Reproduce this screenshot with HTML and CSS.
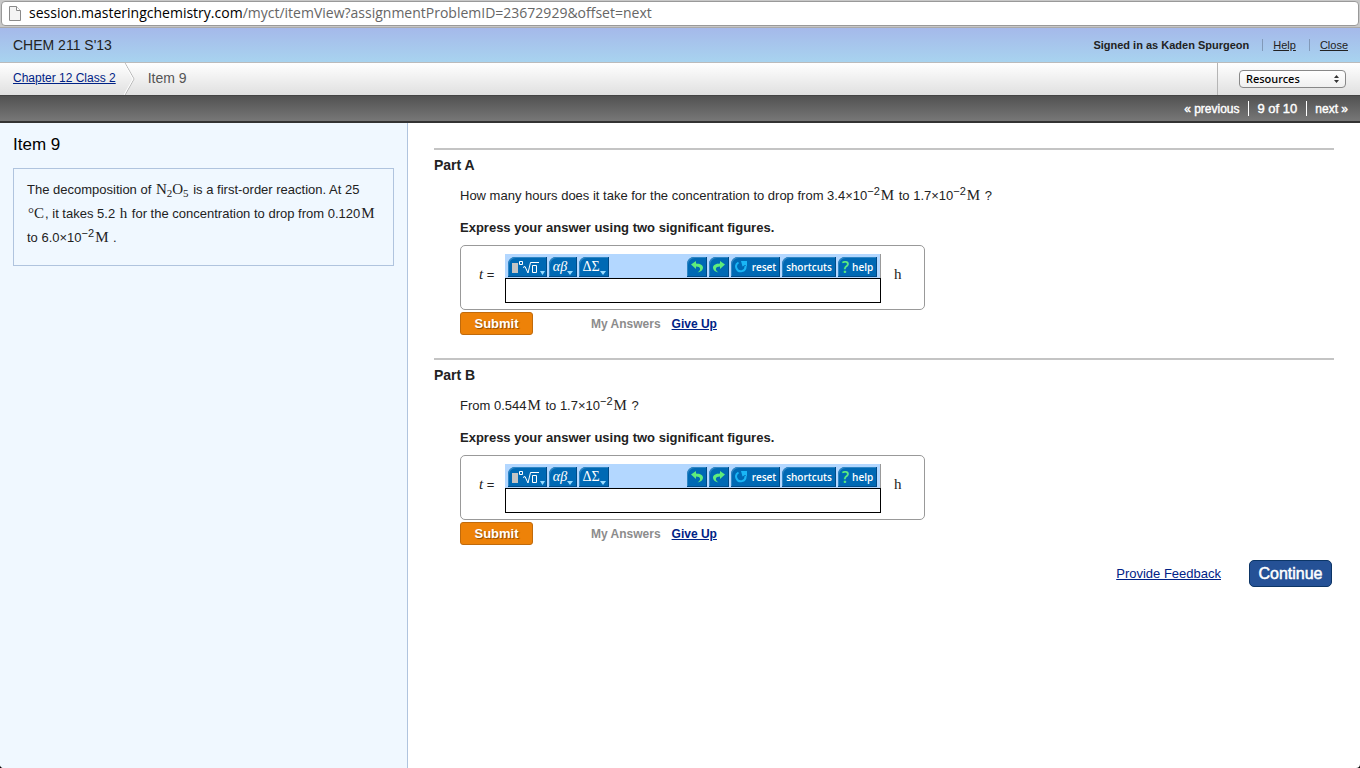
FILE: index.html
```
<!DOCTYPE html>
<html lang="en">
<head>
  <meta charset="UTF-8">
  <title>MasteringChemistry: Item 9</title>
  <link rel="stylesheet" href="styles.css">
</head>
<body>

<div class="address-bar">
  <div class="address">
    <svg width="12" height="15" viewBox="0 0 12 15"><path d="M.5.5h7l4 4v10H.5z" fill="#f4f4f4" stroke="#8a8a8a"/><path d="M7.500.5v4h4" fill="#fff" stroke="#8a8a8a"/></svg>
    <span class="url"><b>session.masteringchemistry.com</b>/myct/itemView?assignmentProblemID=23672929&amp;offset=next</span>
  </div>
</div>

<header class="course-bar">
  <span class="course">CHEM 211 S'13</span>
  <div class="account">
    <strong>Signed in as Kaden Spurgeon</strong>
    <a href="#">Help</a>
    <a href="#">Close</a>
  </div>
</header>

<nav class="crumbs">
  <a href="#">Chapter 12 Class 2</a>
  <svg class="chevron" width="11" height="32" viewBox="0 0 11 32"><path d="M1 0l9 16-9 16" fill="none" stroke="#b5b5b5"/><path d="M0 0l9 16-9 16" fill="none" stroke="#fff"/></svg>
  <span class="here">Item 9</span>
  <div class="resources">
    <div class="select-wrap">
      <select aria-label="Resources">
        <option>Resources</option>
      </select>
      <svg width="5" height="8" viewBox="0 0 5 8"><path d="M0 3l2.500-3L5 3zM0 5h5L2.500 8z" fill="#333"/></svg>
    </div>
  </div>
</nav>

<div class="pager">
  <a href="#">« previous</a>
  <span>9 of 10</span>
  <a href="#">next »</a>
</div>

<div class="content">
  <aside class="sidebar">
    <h1>Item 9</h1>
    <div class="problem">
      The decomposition of <span class="math">N<sub>2</sub>O<sub>5</sub></span> is a first-order reaction. At 25 <span class="math">°C</span>, it takes 5.2 <span class="math">h</span> for the concentration to drop from 0.120<span class="math">M</span> to 6.0×10<sup>−2</sup><span class="math">M</span> .
    </div>
  </aside>

  <main class="parts">
    <section class="part">
      <h2>Part A</h2>
      <div class="part-body">
        <p>How many hours does it take for the concentration to drop from 3.4×10<sup>−2</sup><span class="math">M</span> to 1.7×10<sup>−2</sup><span class="math">M</span> ?</p>
        <p class="instruction">Express your answer using two significant figures.</p>
        <div class="answer">
          <label for="answer-a"><i>t</i> =</label>
          <div class="editor">
            <div class="toolbar">
              <button class="tool templates" aria-label="Templates"><svg width="34" height="18" viewBox="0 0 34 18"><path d="M1 5h6v10H1z" fill="#c4c4c4"/><path d="M8.500 3.500h3v3h-3zM21.500 7.500h4v7h-4z" fill="none" stroke="#fff"/><path d="M12 9.500l2-1 3 6.500 2.500-10.500H28" fill="none" stroke="#fff"/><path d="M29 13h5l-2.500 4z" fill="#9bdcff"/></svg></button>
              <button class="tool greek"><i>αβ</i><span class="caret"></span></button>
              <button class="tool greek caps">ΔΣ<span class="caret"></span></button>
              <span class="space"></span>
              <button class="tool" aria-label="Undo"><svg width="14" height="13" viewBox="0 0 14 13"><path d="M1 4.500L6 1v2.500c4.500.2 7 1.500 7 4.200 0 2.300-2 4-5.500 4.800 2-1.500 2.800-2.500 2.600-3.700C9.800 7.300 8.500 6.500 6 6.500V9z" fill="#5fec7c"/></svg></button>
              <button class="tool" aria-label="Redo"><svg width="14" height="13" viewBox="0 0 14 13"><path d="M13 4.500L8 1v2.500C3.500 3.700 1 5 1 7.700c0 2.300 2 4 5.500 4.800-2-1.500-2.800-2.500-2.600-3.700C4.200 7.300 5.500 6.500 8 6.500V9z" fill="#5fec7c"/></svg></button>
              <button class="tool reset"><svg width="13" height="13" viewBox="0 0 13 13"><path d="M3.500 2.500A4.700 4.700 0 1 0 10.500 6" fill="none" stroke="#19b5f5" stroke-width="2"/><path d="M6 1l6 0v5.500L10 5 7.500 6.500z" fill="#19b5f5"/></svg>reset</button>
              <button class="tool shortcuts">shortcuts</button>
              <button class="tool help"><span class="mark">?</span>help</button>
            </div>
            <input type="text" id="answer-a">
          </div>
          <span class="unit">h</span>
        </div>
        <div class="actions">
          <button class="submit">Submit</button>
          <span class="my-answers">My Answers</span>
          <a href="#">Give Up</a>
        </div>
      </div>
    </section>

    <section class="part">
      <h2>Part B</h2>
      <div class="part-body">
        <p>From 0.544<span class="math">M</span> to 1.7×10<sup>−2</sup><span class="math">M</span> ?</p>
        <p class="instruction">Express your answer using two significant figures.</p>
        <div class="answer">
          <label for="answer-b"><i>t</i> =</label>
          <div class="editor">
            <div class="toolbar">
              <button class="tool templates" aria-label="Templates"><svg width="34" height="18" viewBox="0 0 34 18"><path d="M1 5h6v10H1z" fill="#c4c4c4"/><path d="M8.500 3.500h3v3h-3zM21.500 7.500h4v7h-4z" fill="none" stroke="#fff"/><path d="M12 9.500l2-1 3 6.500 2.500-10.500H28" fill="none" stroke="#fff"/><path d="M29 13h5l-2.500 4z" fill="#9bdcff"/></svg></button>
              <button class="tool greek"><i>αβ</i><span class="caret"></span></button>
              <button class="tool greek caps">ΔΣ<span class="caret"></span></button>
              <span class="space"></span>
              <button class="tool" aria-label="Undo"><svg width="14" height="13" viewBox="0 0 14 13"><path d="M1 4.500L6 1v2.500c4.500.2 7 1.500 7 4.200 0 2.300-2 4-5.500 4.800 2-1.500 2.800-2.500 2.600-3.700C9.800 7.300 8.500 6.500 6 6.500V9z" fill="#5fec7c"/></svg></button>
              <button class="tool" aria-label="Redo"><svg width="14" height="13" viewBox="0 0 14 13"><path d="M13 4.500L8 1v2.500C3.500 3.700 1 5 1 7.700c0 2.300 2 4 5.500 4.800-2-1.500-2.800-2.500-2.600-3.700C4.200 7.300 5.500 6.500 8 6.500V9z" fill="#5fec7c"/></svg></button>
              <button class="tool reset"><svg width="13" height="13" viewBox="0 0 13 13"><path d="M3.500 2.500A4.700 4.700 0 1 0 10.500 6" fill="none" stroke="#19b5f5" stroke-width="2"/><path d="M6 1l6 0v5.500L10 5 7.500 6.500z" fill="#19b5f5"/></svg>reset</button>
              <button class="tool shortcuts">shortcuts</button>
              <button class="tool help"><span class="mark">?</span>help</button>
            </div>
            <input type="text" id="answer-b">
          </div>
          <span class="unit">h</span>
        </div>
        <div class="actions">
          <button class="submit">Submit</button>
          <span class="my-answers">My Answers</span>
          <a href="#">Give Up</a>
        </div>
      </div>
    </section>

    <div class="footer">
      <a href="#">Provide Feedback</a>
      <button class="continue">Continue</button>
    </div>
  </main>
</div>

</body>
</html>
```
FILE: styles.css
```
* {
  box-sizing: border-box;
}

html {
  background: #000;
}

body {
  margin: 0;
  min-height: 100vh;
  display: flex;
  flex-direction: column;
  background: #fff;
  border-radius: 0 0 4px 4px;
  overflow: hidden;
  font-family: "Liberation Sans", Arial, sans-serif;
  font-size: 13px;
  color: #222;
}

a { color: #002286; }

/* top bars */
.address-bar {
  padding: 1px;
  background: #c8c8c8;
  border-bottom: 1px solid #a9a9a9;
}

.address {
  display: flex;
  align-items: center;
  gap: 8px;
  height: 25px;
  padding: 0 7px;
  background: #fff;
  border: 1px solid #999;
  border-radius: 4px;
}

.url {
  font-family: "Open Sans", "Noto Sans", sans-serif;
  font-size: 14px;
  line-height: 18px;
  padding-bottom: 1px;
  color: #666;
}

.url b {
  font-weight: normal;
  color: #000;
}

.course-bar {
  display: flex;
  justify-content: space-between;
  align-items: center;
  height: 34px;
  padding: 0 12px 0 13px;
  background: linear-gradient(#a5b9ea, #a8d3ef);
}

.course { font-size: 14px; }

.account {
  display: flex;
  align-items: center;
  font-size: 11px;
}

.account a {
  color: #222;
  margin-left: 13px;
  padding-left: 10px;
  border-left: 1px solid #8199b8;
}

.crumbs {
  display: flex;
  align-items: center;
  height: 33px;
  padding-left: 13px;
  border-top: 1px solid #bbb;
  background: linear-gradient(#fff, #e0e0e0);
  font-size: 12px;
  line-height: 30px;
}

.chevron { margin-left: 8px; }

.crumbs > a,
.here { padding-bottom: 2px; }

.here {
  margin-left: 13px;
  font-size: 14px;
  color: #555;
}

.resources {
  display: flex;
  align-items: center;
  align-self: stretch;
  margin-left: auto;
  padding: 0 14px 0 21px;
  border-left: 1px solid #b5b5b5;
}

.select-wrap {
  position: relative;
  display: flex;
}

.select-wrap select {
  appearance: none;
  width: 107px;
  height: 18px;
  padding: 0 6px;
  border: 1px solid #888;
  border-radius: 4px;
  background: linear-gradient(#fff, #f0f0f0);
  font-family: "Noto Sans", "Open Sans", sans-serif;
  font-size: 11px;
  font-weight: 500;
  line-height: 16px;
  color: #000;
}

.select-wrap svg {
  position: absolute;
  right: 7px;
  top: 5px;
  pointer-events: none;
}

.pager {
  display: flex;
  justify-content: flex-end;
  align-items: center;
  height: 28px;
  padding-right: 12px;
  border-top: 1px solid #444;
  border-bottom: 2px solid #333;
  background: linear-gradient(#525252, #777);
  font-size: 12px;
  -webkit-text-stroke: 0.4px #fff;
  color: #fff;
}

.pager a {
  color: #fff;
  text-decoration: none;
}

.pager span {
  margin: 0 8px;
  padding: 0 9px;
  border: 1px solid #fff;
  border-width: 0 1px;
  font-size: 13px;
}

/* problem text */
.content {
  display: flex;
  flex: 1;
}

.sidebar {
  width: 30%;
  padding: 12px 13px;
  background: #f0f8ff;
  border-right: 1px solid #b0c4de;
}

.sidebar h1 {
  margin: 0 0 13px;
  font-size: 17px;
  font-weight: normal;
  line-height: 20px;
  color: #000;
}

.problem {
  padding: 9px 13px 15px;
  border: 1px solid #b0c4de;
  line-height: 24px;
}

.math {
  margin: 0 1px;
  font-family: "Liberation Serif", "Times New Roman", serif;
  font-size: 15px;
  line-height: 0;
}

sub, sup {
  font-size: 11px;
  line-height: 0;
}

sub { vertical-align: -3px; }
sup { vertical-align: 5px; }

/* parts */
.parts {
  flex: 1;
  padding: 25px 26px;
}

.part {
  border-top: 2px solid #c4c4c4;
  padding: 6px 0 23px;
}

.part:nth-of-type(2) { padding-bottom: 15px; }

.part h2 {
  margin: 0;
  font-size: 14px;
  line-height: 18px;
}

.part-body { padding-left: 26px; }

.part p {
  margin: 13px 0 0;
  line-height: 18px;
}

.part .instruction {
  margin: 14px 0 8px;
  font-weight: bold;
}

.answer {
  display: flex;
  width: 465px;
  padding: 8px 18px 6px;
  border: 1px solid #999;
  border-radius: 5px;
}

.answer label {
  width: 26px;
  padding-top: 11px;
  font-size: 13px;
  line-height: 18px;
}

.answer i,
.unit {
  font-family: "Liberation Serif", "Times New Roman", serif;
  font-size: 15px;
}

.unit {
  margin-left: 13px;
  padding-top: 11px;
  line-height: 18px;
}

.editor { width: 376px; }

.toolbar {
  display: flex;
  gap: 2px;
  height: 24px;
  padding: 3px 3px 0;
  background: #b3d7ff;
  border-right: 1px solid #999;
}

.space { flex: 1; }

.tool {
  display: flex;
  align-items: center;
  justify-content: center;
  width: 20px;
  height: 20px;
  padding: 0 0 1px;
  border: 0;
  border-radius: 7px 0 0 0;
  background: #0069b4;
  box-shadow: inset -1px -1px #004b87, inset 1px 1px #2f86c4;
  font-family: "Open Sans", "Noto Sans", sans-serif;
  font-size: 10px;
  font-weight: 600;
  color: #fff;
}

.templates { width: 39px; }
.greek { width: 28px; }
.caps { width: 30px; }
.reset { width: 49px; gap: 4px; }
.shortcuts { width: 54px; }
.help { width: 39px; gap: 3px; }

.greek,
.greek i {
  font-family: "Liberation Serif", "Times New Roman", serif;
  font-size: 14px;
  font-weight: normal;
  line-height: 18px;
}

.caret {
  align-self: flex-end;
  margin-bottom: 1px;
  border: solid transparent;
  border-width: 4px 3px 0;
  border-top-color: #9bdcff;
}

.mark {
  font-size: 16px;
  line-height: 18px;
  color: #5fec7c;
}

.editor input {
  display: block;
  width: 100%;
  height: 25px;
  border: 1px solid #000;
  background: #fff;
}

.actions {
  display: flex;
  align-items: center;
  margin-top: 2px;
  font-weight: bold;
  font-size: 12px;
}

.submit {
  width: 73px;
  height: 23px;
  padding: 0;
  border: 1px solid #c06a0c;
  border-radius: 3px;
  background: #ee8208;
  font-family: inherit;
  font-size: 13px;
  font-weight: bold;
  color: #fff;
  text-shadow: 1px 1px 1px #8a4b00;
}

.my-answers {
  margin: 0 11px 0 58px;
  color: #8c8c8c;
}

.footer {
  display: flex;
  justify-content: flex-end;
  align-items: center;
  gap: 28px;
  padding-right: 2px;
}

.continue {
  width: 83px;
  height: 27px;
  padding: 0;
  border: 1px solid #0c3566;
  border-radius: 5px;
  background: #255196;
  font-family: inherit;
  font-size: 16px;
  -webkit-text-stroke: 0.5px #fff;
  color: #fff;
}
```
